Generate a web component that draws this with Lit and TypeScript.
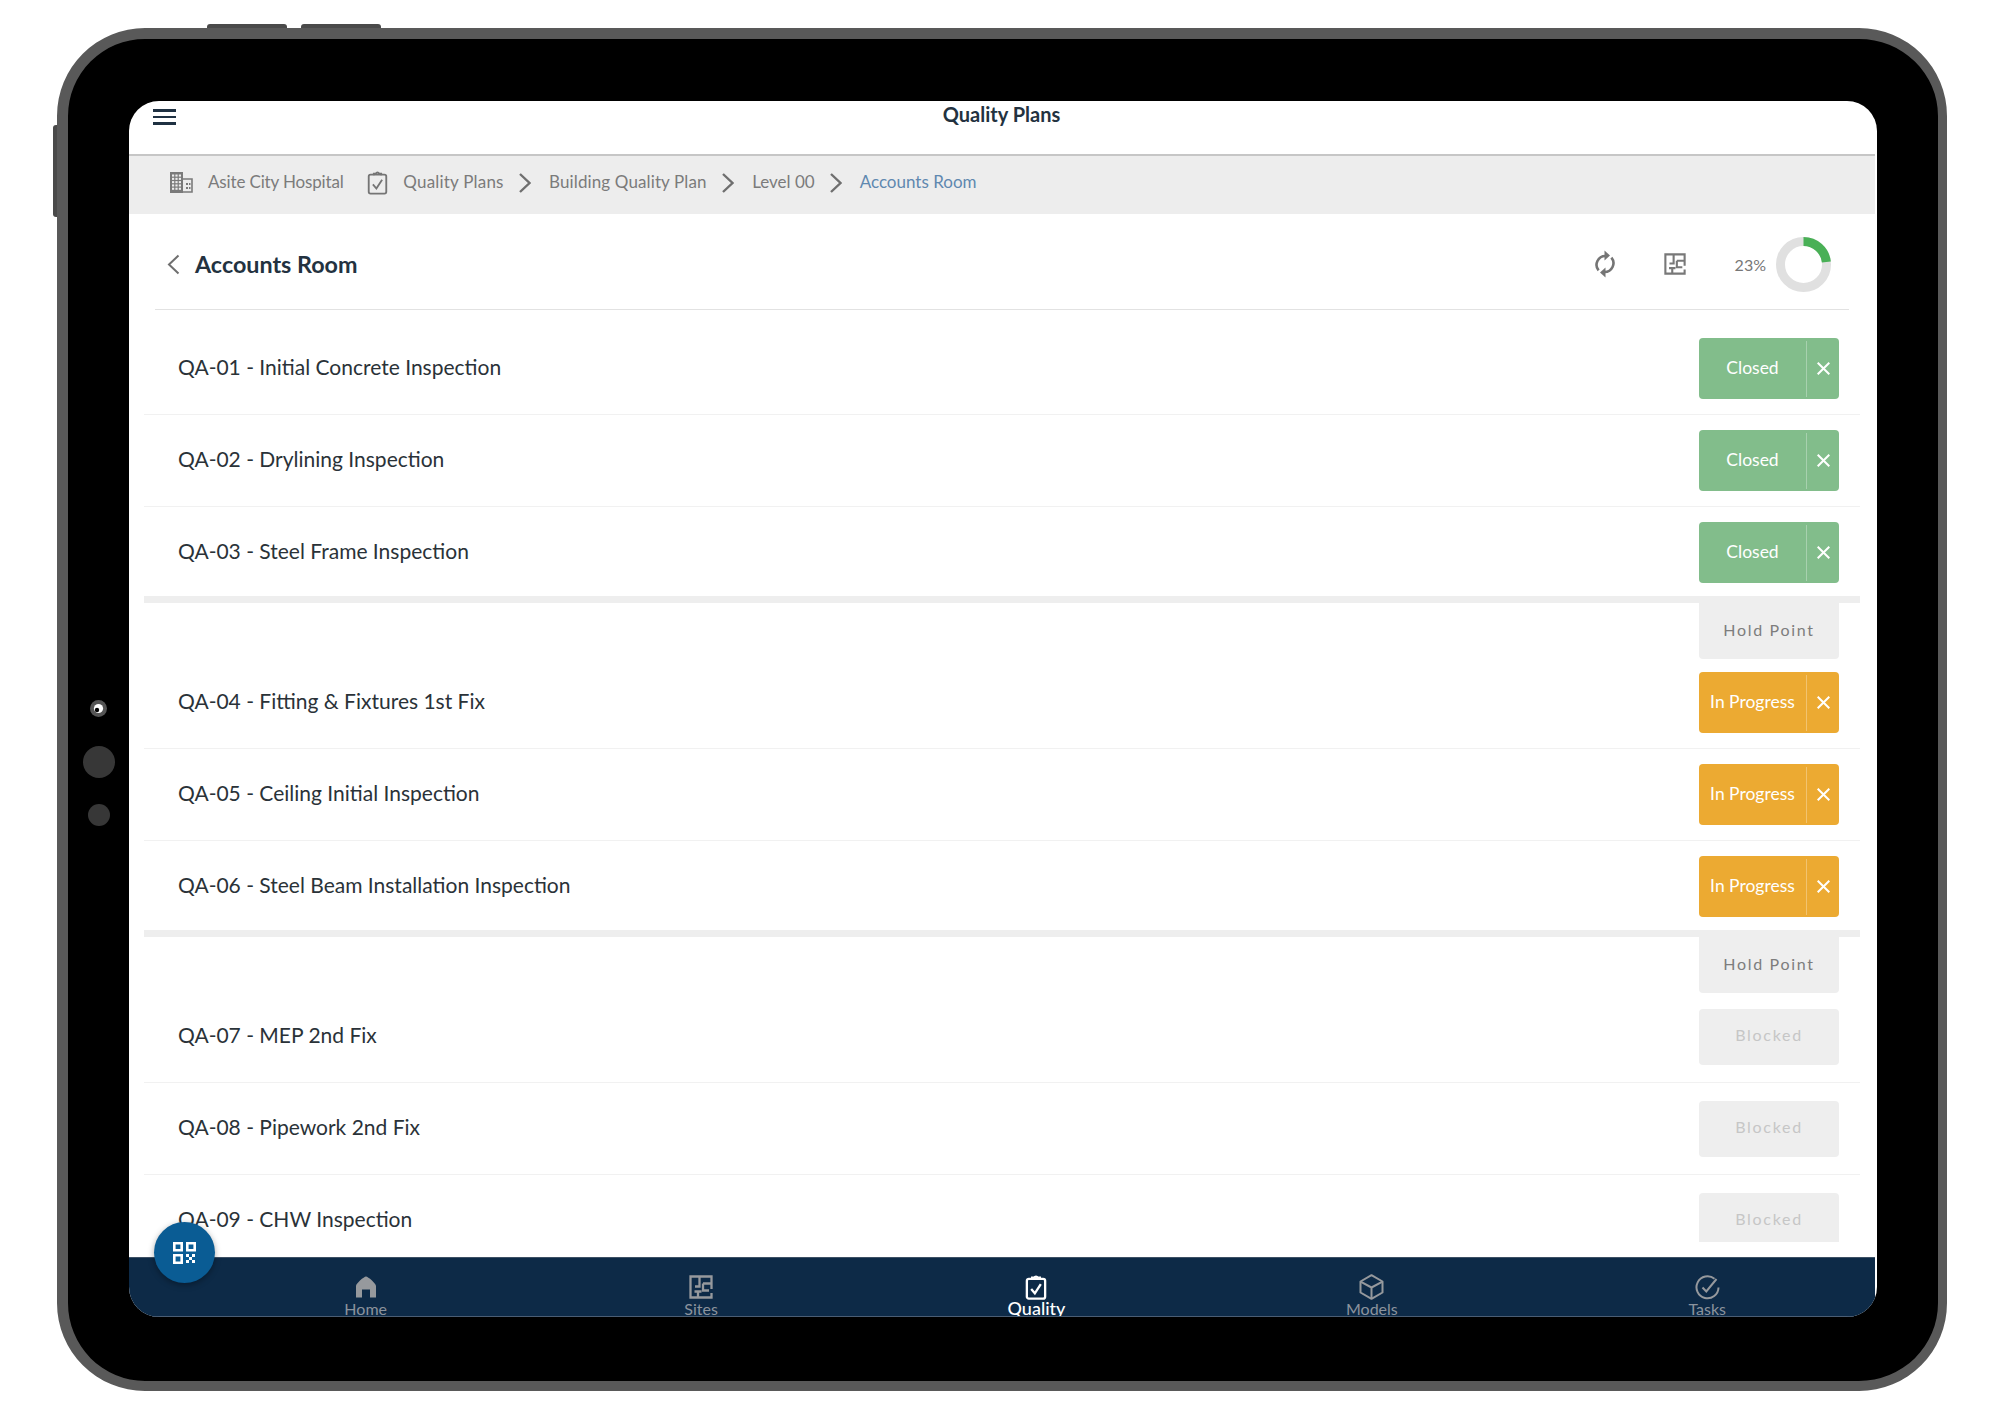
import { LitElement, html, css, svg } from "lit";
import { customElement } from "lit/decorators.js";

type Row = { name: string; kind: "closed" | "progress" | "blocked" | "hold"; last?: boolean };

const rows: Row[] = [
  { name: "QA-01 - Initial Concrete Inspection", kind: "closed" },
  { name: "QA-02 - Drylining Inspection", kind: "closed" },
  { name: "QA-03 - Steel Frame Inspection", kind: "closed", last: true },
  { name: "", kind: "hold" },
  { name: "QA-04 - Fitting & Fixtures 1st Fix", kind: "progress" },
  { name: "QA-05 - Ceiling Initial Inspection", kind: "progress" },
  { name: "QA-06 - Steel Beam Installation Inspection", kind: "progress", last: true },
  { name: "", kind: "hold" },
  { name: "QA-07 - MEP 2nd Fix", kind: "blocked" },
  { name: "QA-08 - Pipework 2nd Fix", kind: "blocked" },
  { name: "QA-09 - CHW Inspection", kind: "blocked" },
];

const floorplan = (size: number, color: string) => html`<svg width=${size} height=${size} viewBox="0 0 24 24" fill="none" stroke=${color} stroke-width="2.3">
  <path d="M22.5 14V1.5H1.5V22.5H22.5V18" />
  <path d="M10.5 2V11.5H6M14 8.5H22M14 8.5V15.5H20M9 22V16.5H5.5M9 16.5H12.5" />
</svg>`;

const clipboard = (w: number, h: number, color: string, sw: number) => html`<svg width=${w} height=${h} viewBox="0 0 22 26" fill="none" stroke=${color} stroke-width=${sw}>
  <rect x="1.5" y="4" width="19" height="20.5" rx="2" />
  <path d="M7 4.5V2.8H9.2A2 2 0 0 1 12.8 2.8H15V4.5" />
  <path d="M6 14.5L9.8 19L16 9.5" />
</svg>`;

const chevron = html`<svg class="chev" width="13" height="20" viewBox="0 0 13 20" fill="none" stroke="#6f6f6f" stroke-width="2.4"><path d="M2 1L11.5 10L2 19" /></svg>`;

const closeIcon = html`<svg width="13" height="13" viewBox="0 0 13 13" fill="none" stroke="#fff" stroke-width="2"><path d="M.7 .7L12.3 12.3M12.3 .7L.7 12.3" /></svg>`;

const cellRects = () => {
  const out = [];
  for (let r = 0; r < 5; r++) {
    for (let c = 0; c < 3; c++) {
      out.push(svg`<rect x=${2 + c * 3.4} y=${2.5 + r * 3.3} width="2.2" height="2.1" fill="#ededed" />`);
    }
  }
  return out;
};

@customElement("app-root")
export class AppRoot extends LitElement {
  static styles = css`
    :host { display: block; width: 2000px; height: 1414px; background: #fff; font-family: "Lato", "Open Sans", sans-serif; overflow: hidden; }
    .stage { padding: 28px 53px 0 57px; }
    .device { position: relative; box-sizing: border-box; width: 1890px; height: 1363px; background: #000; border-style: solid; border-color: #595959; border-width: 11px 9px 10px 11px; border-radius: 88px; padding: 62px 0 64px; display: flex; }
    .hw { position: absolute; background: #4a4a4a; }
    .hw.t1 { top: -15px; left: 139px; width: 80px; height: 4px; border-radius: 3px 3px 0 0; }
    .hw.t2 { top: -15px; left: 233px; width: 80px; height: 4px; border-radius: 3px 3px 0 0; }
    .hw.l { top: 86px; left: -15px; width: 4px; height: 92px; border-radius: 3px 0 0 3px; }
    .bezel { width: 61px; flex: none; display: flex; flex-direction: column; align-items: center; padding-top: 599px; box-sizing: border-box; }
    .bezel svg { display: block; }
    .dot { background: #373737; border-radius: 50%; }
    .dot.big { width: 32px; height: 32px; margin: 29px 0 26px; }
    .dot.small { width: 22px; height: 22px; }
    .screen { position: relative; width: 1748px; height: 1216px; flex: none; box-sizing: border-box; padding-right: 2px; background: #fff; border-radius: 30px; overflow: hidden; display: flex; flex-direction: column; }
    .topbar { height: 53px; flex: none; display: grid; grid-template-columns: 1fr auto 1fr; padding-left: 24px; border-bottom: 2px solid #c6c6c6; }
    .burger { display: flex; flex-direction: column; gap: 4px; padding-top: 8px; }
    .burger i { display: block; width: 23px; height: 2.6px; background: #1f3142; }
    .apptitle { font-size: 20px; font-weight: 700; color: #233240; padding-top: 1px; line-height: 24px; margin-left: -25px; }
    .crumbs { height: 58px; flex: none; box-sizing: border-box; background: #ededed; display: flex; align-items: center; padding: 0 0 5px 41px; font-size: 17px; color: #7b7b7b; white-space: nowrap; }
    .crumbs svg { flex: none; }
    .crumbs span { padding-bottom: 2px; }
    .crumbs .t1 { margin-left: 15px; letter-spacing: -.15px; }
    .crumbs .ic2 { margin-left: 23.7px; padding: 0; display: flex; }
    .crumbs .t2 { margin: 0 -2.6px 0 15px; letter-spacing: .2px; }
    .crumbs .t3 { margin-right: -2.5px; letter-spacing: .12px; }
    .crumbs .t4 { margin-right: -3px; }
    .crumbs .chev { margin: 0 18px 0 17px; }
    .crumbs .cur { color: #5f88b0; }
    .head { height: 96px; flex: none; box-sizing: border-box; margin: 0 26px 0 26px; display: flex; align-items: center; border-bottom: 1.5px solid #e2e2e2; padding: 5px 0 0 12px; }
    .head h1 { margin: 0 0 0 15px; font-size: 23.3px; font-weight: 700; color: #233240; }
    .head .sp { flex: 1; }
    .head .sync { margin-right: 48px; }
    .head .pct { font-size: 16px; color: #777; margin: 0 10px 0 49px; }
    .head .donut { margin-right: 18px; }
    .list { flex: 1; min-height: 0; overflow: hidden; margin: 0 15px 15px 15px; padding-top: 13px; }
    .row { display: flex; align-items: center; justify-content: space-between; padding: 15px 21px 15px 34px; border-bottom: 1px solid #f1f1f1; min-height: 61px; }
    .row.last { padding-bottom: 13px; border-bottom: 7px solid #eeeeee; }
    .row.hold { padding: 0 21px 13px; justify-content: flex-end; border: 0; min-height: 0; }
    .row.afterhold { padding-top: 0; }
    .row .name { font-size: 21px; color: #2a3238; padding-bottom: 5px; }
    .btn { width: 140px; box-sizing: border-box; border-radius: 4px; display: flex; align-items: center; justify-content: center; color: #fff; font-size: 17.5px; }
    .btn.closed { height: 61px; background: #82bd8b; }
    .btn.progress { height: 61px; background: #ecaa32; }
    .btn .label { flex: 1; text-align: center; padding-bottom: 3px; white-space: nowrap; }
    .btn .x { width: 33px; height: 56px; flex: none; display: flex; align-items: center; justify-content: center; border-left: 1.5px solid rgba(255, 255, 255, .3); box-sizing: border-box; }
    .btn.hold, .btn.blocked { height: 56px; background: #eeeeee; font-size: 16px; letter-spacing: 1.7px; color: #7d7d7d; font-weight: 400; padding-bottom: 4px; }
    .btn.hold { border-radius: 0 0 4px 4px; }
    .btn.blocked { color: #c6c6c6; }
    .nav { height: 60px; flex: none; box-sizing: border-box; background: #0d2a47; border-top: 1px solid #3d5064; border-bottom: 1px solid #4a5d73; padding-left: 69px; display: grid; grid-template-columns: repeat(5, 335.4px); overflow: hidden; }
    .tab { display: flex; flex-direction: column; align-items: center; color: #8b939d; font-size: 16px; line-height: 16px; }
    .tab .ic { height: 26px; flex: none; margin-top: 16px; display: flex; align-items: center; justify-content: center; }
    .tab span { margin-top: 1px; white-space: nowrap; }
    .tab.on { color: #fff; font-size: 18px; font-weight: 500; }
    .tab.on span { margin-top: 0; }
    .fab { position: absolute; left: 25px; top: 1121px; width: 61px; height: 61px; border-radius: 50%; background: #0a5c94; box-shadow: 0 2px 6px rgba(0, 0, 0, .35); display: flex; align-items: center; justify-content: center; }
  `;

  private renderRow(r: Row, i: number) {
    if (r.kind === "hold") {
      return html`<div class="row hold"><div class="btn hold">Hold Point</div></div>`;
    }
    const after = i > 0 && rows[i - 1].kind === "hold";
    const cls = `row${r.last ? " last" : ""}${after ? " afterhold" : ""}`;
    const label = r.kind === "closed" ? "Closed" : r.kind === "progress" ? "In Progress" : "Blocked";
    return html`<div class=${cls}>
      <div class="name">${r.name}</div>
      ${r.kind === "blocked"
        ? html`<div class="btn blocked">${label}</div>`
        : html`<div class="btn ${r.kind}"><div class="label">${label}</div><div class="x">${closeIcon}</div></div>`}
    </div>`;
  }

  render() {
    const C = 2 * Math.PI * 23;
    return html`<div class="stage"><div class="device">
      <div class="hw t1"></div><div class="hw t2"></div><div class="hw l"></div>
      <div class="bezel">
        <svg width="17" height="17" viewBox="0 0 17 17"><circle cx="8.5" cy="8.5" r="8.5" fill="#555" /><circle cx="8.5" cy="8.5" r="4.6" fill="#fff" /><circle cx="7" cy="10" r="2.2" fill="#000" /></svg>
        <div class="dot big"></div>
        <div class="dot small"></div>
      </div>
      <div class="screen">
        <div class="topbar">
          <div class="burger"><i></i><i></i><i></i></div>
          <div class="apptitle">Quality Plans</div>
          <div></div>
        </div>
        <div class="crumbs">
          <svg width="23" height="21" viewBox="0 0 23 21">
            <rect x="0" y="0" width="13" height="21" fill="#7a7a7a" />${cellRects()}
            <path d="M13 7H22V20H13" fill="none" stroke="#7a7a7a" stroke-width="1.6" />
            <path d="M16 11h2v2h-2zM16 15h2v2h-2zM19 11h1.5v2H19zM19 15h1.5v2H19z" fill="#7a7a7a" />
          </svg>
          <span class="t1">Asite City Hospital</span>
          <span class="ic2">${clipboard(21, 24, "#757575", 2)}</span>
          <span class="t2">Quality Plans</span>${chevron}
          <span class="t3">Building Quality Plan</span>${chevron}
          <span class="t4">Level 00</span>${chevron}
          <span class="cur">Accounts Room</span>
        </div>
        <div class="head">
          <svg width="13" height="21" viewBox="0 0 13 21" fill="none" stroke="#6f6f6f" stroke-width="2"><path d="M11.5 1.5L2 10.5L11.5 19.5" /></svg>
          <h1>Accounts Room</h1>
          <div class="sp"></div>
          <svg class="sync" width="22" height="28" viewBox="0 0 22 28" fill="none" stroke="#757575" stroke-width="2.6">
            <path d="M11.5 6A8.8 8.8 0 0 0 4.6 20.4" />
            <path d="M10.5 22A8.8 8.8 0 0 0 17.4 7.6" />
            <path d="M10.5 0.5V10.5L16 5.5Z" fill="#757575" stroke="none" />
            <path d="M11.5 17.5V27.5L6 22.5Z" fill="#757575" stroke="none" />
          </svg>
          ${floorplan(22, "#787878")}
          <span class="pct">23%</span>
          <svg class="donut" width="55" height="55" viewBox="0 0 55 55" fill="none" stroke-width="9">
            <circle cx="27.5" cy="27.5" r="23" stroke="#e0e0e0" />
            <circle cx="27.5" cy="27.5" r="23" stroke="#49b056" stroke-dasharray="${C * 0.23} ${C}" transform="rotate(-90 27.5 27.5)" />
          </svg>
        </div>
        <div class="list">${rows.map((r, i) => this.renderRow(r, i))}</div>
        <div class="nav">
          <div class="tab"><div class="ic"><svg width="20" height="22" viewBox="0 0 20 22" fill="#96999d"><path d="M10 0.5C12 0.5 20 7.5 20 10V21.5H14V13.5H6V21.5H0V10C0 7.5 8 0.5 10 0.5Z" /></svg></div><span>Home</span></div>
          <div class="tab"><div class="ic">${floorplan(24, "#96999d")}</div><span>Sites</span></div>
          <div class="tab on"><div class="ic">${clipboard(22, 25, "#fff", 2.4)}</div><span>Quality</span></div>
          <div class="tab"><div class="ic"><svg width="25" height="26" viewBox="0 0 25 26" fill="none" stroke="#96999d" stroke-width="2" stroke-linejoin="round"><path d="M12.5 1.2L23.5 7.5V18.5L12.5 24.8L1.5 18.5V7.5Z" /><path d="M2 7.8L12.5 13.5L23 7.8M12.5 13.5V24.5" /></svg></div><span>Models</span></div>
          <div class="tab"><div class="ic"><svg width="25" height="26" viewBox="0 0 25 26" fill="none" stroke="#96999d" stroke-width="2"><path d="M19.5 4.8A11 11 0 1 0 23.5 13.5" /><path d="M7.5 13.5L11.3 17.5L21.5 5" /></svg></div><span>Tasks</span></div>
        </div>
        <div class="fab"><svg width="23" height="22" viewBox="0 0 23 22">
          <path fill-rule="evenodd" fill="#fff" d="M0 0H10V9.5H0ZM2.6 2.5V7H7.4V2.5ZM13 0H23V9.5H13ZM15.6 2.5V7H20.4V2.5ZM0 12H10V22H0ZM2.6 14.5V19.5H7.4V14.5Z" />
          <path fill="#fff" d="M13 12h3v3h-3zM19 12h3v3h-3zM16 15h3v3h-3zM13 18h3v3h-3zM19 18h3v3h-3z" />
        </svg></div>
      </div>
    </div></div>`;
  }
}
